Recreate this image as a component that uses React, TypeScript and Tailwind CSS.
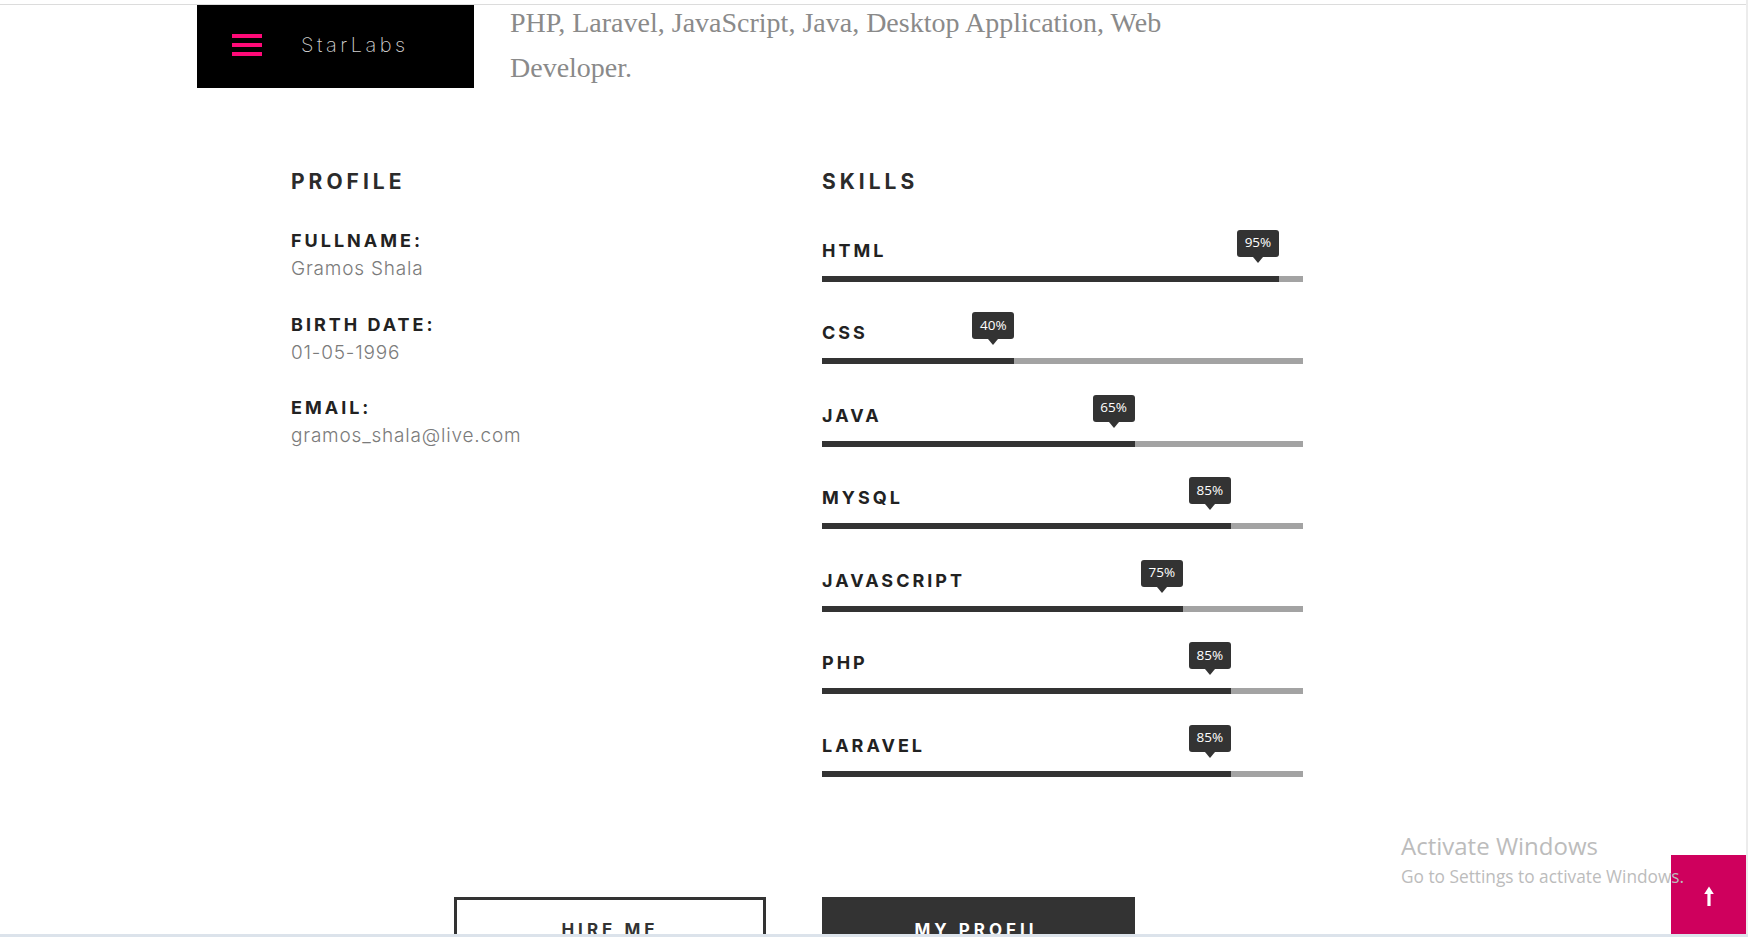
import React from "react";

const skills: { name: string; pct: number }[] = [
  { name: "HTML", pct: 95 },
  { name: "CSS", pct: 40 },
  { name: "JAVA", pct: 65 },
  { name: "MYSQL", pct: 85 },
  { name: "JAVASCRIPT", pct: 75 },
  { name: "PHP", pct: 85 },
  { name: "LARAVEL", pct: 85 },
];

const profile: { label: string; value: string }[] = [
  { label: "FULLNAME:", value: "Gramos Shala" },
  { label: "BIRTH DATE:", value: "01-05-1996" },
  { label: "EMAIL:", value: "gramos_shala@live.com" },
];

const sans = "font-['Inter','Open_Sans',sans-serif]";

export default function App() {
  return (
    <div className="relative h-[937px] w-full overflow-hidden bg-white">
      <div className="pt-[4px]">
        <div className="border-t border-[#dcdcdc]">
          {/* intro text */}
          <div className="-mt-[5px] pl-[510px] font-['Liberation_Serif',serif] text-[28px] leading-[45px] text-[#8a8a8a]">
            <div className="whitespace-nowrap">
              PHP, Laravel, JavaScript, Java, Desktop Application, Web
            </div>
            <div className="whitespace-nowrap">Developer.</div>
          </div>

          {/* profile + skills */}
          <div className={`mt-[78px] flex pl-[291px] ${sans}`}>
            <div className="w-[531px]">
              <h2 className="h-[28px] text-[21px] font-bold leading-[28px] tracking-[4px] text-[#2b2b2b]">
                PROFILE
              </h2>
              <div className="mt-[33px] flex flex-col gap-[31.5px]">
                {profile.map((p) => (
                  <div key={p.label}>
                    <div className="h-[24px] text-[18px] font-bold leading-[24px] tracking-[3px] text-[#222]">
                      {p.label}
                    </div>
                    <div className="mt-[4px] h-[24px] text-[19px] font-light leading-[24px] tracking-[0.8px] text-[#7b7b7b]">
                      {p.value}
                    </div>
                  </div>
                ))}
              </div>
            </div>
            <div className="w-[481px]">
              <h2 className="h-[28px] text-[21px] font-bold leading-[28px] tracking-[4px] text-[#2b2b2b]">
                SKILLS
              </h2>
              <div className="mt-[42.5px] flex flex-col gap-[39.5px]">
                {skills.map((s) => (
                  <div key={s.name}>
                    <div className="h-[24px] text-[18px] font-bold leading-[24px] tracking-[3px] text-[#222]">
                      {s.name}
                    </div>
                    <div className="mt-[13px] flex h-[6px] w-full bg-[#a3a3a3]">
                      <div
                        className="relative h-full bg-[#333333]"
                        style={{ width: `${s.pct}%` }}
                      >
                        <div className="absolute bottom-[25px] right-0 flex h-[27px] w-[42px] items-center justify-center rounded-[3px] bg-[#333333] font-['Open_Sans',sans-serif] text-[13.5px] leading-none text-white">
                          {s.pct}%
                          <span className="absolute left-1/2 top-full -translate-x-1/2 border-x-[5px] border-t-[6px] border-x-transparent border-t-[#333333]" />
                        </div>
                      </div>
                    </div>
                  </div>
                ))}
              </div>
            </div>
          </div>

          {/* buttons */}
          <div className={`mt-[120.5px] flex gap-[56px] pl-[454px] ${sans}`}>
            <div className="flex h-[64px] w-[312px] items-center justify-center border-[3px] border-[#333333] pt-[4px] text-[17px] font-bold tracking-[4px] text-[#333333]">
              HIRE ME
            </div>
            <div className="flex h-[64px] w-[313px] items-center justify-center bg-[#333333] pt-[4px] text-[17px] font-bold tracking-[4px] text-white">
              MY PROFIL
            </div>
          </div>
        </div>
      </div>

      {/* fixed header logo box */}
      <div className="absolute left-[197px] top-[5px] flex h-[83px] w-[277px] items-start bg-black pl-[35px] pt-[29px]">
        <div className="flex w-[30px] flex-col gap-[5px]">
          <span className="block h-[4px] w-full bg-[#ff0a78]" />
          <span className="block h-[4px] w-full bg-[#ff0a78]" />
          <span className="block h-[4px] w-full bg-[#ff0a78]" />
        </div>
        <div className="-mt-[1px] ml-[39px] font-['Inter',sans-serif] text-[20px] font-extralight leading-[24px] tracking-[3.5px] text-[#d0d0d0]">
          StarLabs
        </div>
      </div>

      {/* scroll to top */}
      <div className="absolute bottom-0 right-[2px] flex h-[82px] w-[75px] items-center justify-center bg-[#cf005d]">
        <svg width="12" height="20" viewBox="0 0 12 20" className="-mt-[1px]">
          <path d="M6 0.5 L1.2 8 H4.4 V20 H7.6 V8 H10.8 Z" fill="#ffffff" />
        </svg>
      </div>

      {/* windows watermark */}
      <div className="pointer-events-none absolute left-[1401px] top-[830px] font-['Open_Sans',sans-serif] text-[#bcbcbc]">
        <div className="whitespace-nowrap text-[24px] leading-[32px]">Activate Windows</div>
        <div className="mt-[4px] whitespace-nowrap text-[17.3px] leading-[22px]">
          Go to Settings to activate Windows.
        </div>
      </div>

      {/* window edges */}
      <div className="absolute right-0 top-0 h-full w-[2px] bg-[#ececec]" />
      <div className="absolute bottom-0 left-0 h-[3px] w-full bg-[#dce3eb]" />
    </div>
  );
}
